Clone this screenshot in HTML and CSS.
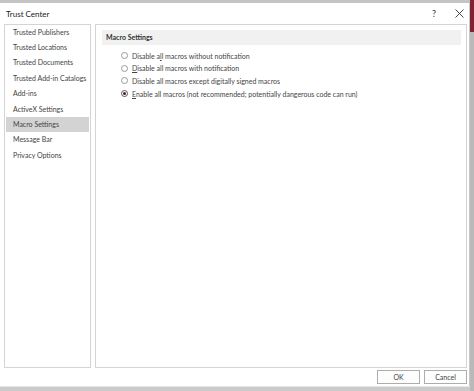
FILE: index.html
```html
<!DOCTYPE html>
<html>
<head>
<meta charset="utf-8">
<link rel="stylesheet" href="styles.css">
</head>
<body>
<div class="screen">
  <div class="main">
    <div class="topstrip"></div>
    <div class="dialog">
      <div class="titlebar">
        <span class="title">Trust Center</span>
        <span class="help">?</span>
        <span class="close">
          <svg width="9" height="9" viewBox="0 0 9 9"><path d="M0.5 0.5L8.5 8.5M8.5 0.5L0.5 8.5" stroke="#333" stroke-width="0.9" fill="none"/></svg>
        </span>
      </div>
      <div class="content">
        <ul class="nav">
          <li>Trusted Publishers</li>
          <li>Trusted Locations</li>
          <li>Trusted Documents</li>
          <li>Trusted Add-in Catalogs</li>
          <li>Add-ins</li>
          <li>ActiveX Settings</li>
          <li class="selected">Macro Settings</li>
          <li>Message Bar</li>
          <li>Privacy Options</li>
        </ul>
        <div class="panel">
          <div class="header">Macro Settings</div>
          <div class="options">
            <label class="opt"><span class="radio"></span><span>Disable a<u>l</u>l macros without notification</span></label>
            <label class="opt"><span class="radio"></span><span><u>D</u>isable all macros with notification</span></label>
            <label class="opt"><span class="radio"></span><span>Disable all macros except digitally signed macros</span></label>
            <label class="opt"><span class="radio checked"></span><span><u>E</u>nable all macros (not recommended; potentially dangerous code can run)</span></label>
          </div>
        </div>
      </div>
      <div class="footer">
        <button class="btn">OK</button>
        <button class="btn">Cancel</button>
      </div>
    </div>
    <div class="bottomstrip"></div>
  </div>
  <div class="edge">
    <div class="edge-red"></div>
    <div class="edge-gray"></div>
  </div>
</div>
</body>
</html>
```

FILE: styles.css
```css
* { box-sizing: border-box; }
html, body { margin: 0; padding: 0; }
body {
  width: 474px;
  height: 391px;
  overflow: hidden;
  background: #fff;
  font-family: "Lato", "Noto Sans", sans-serif;
  color: #3a3a3a;
}
.screen {
  display: flex;
  width: 474px;
  height: 391px;
}
.main {
  width: 470px;
  display: flex;
  flex-direction: column;
}
.topstrip {
  height: 3px;
  background: #c4c4c4;
}
.dialog {
  height: 383px;
  display: flex;
  flex-direction: column;
  background: #fff;
  border-right: 1px solid #c8c8c8;
}
.titlebar {
  height: 21px;
  display: flex;
  align-items: center;
  padding: 0 0 0 6px;
  font-size: 8px;
  color: #222;
}
.title { flex: 1; }
.help {
  width: 10px;
  font-size: 9px;
  margin-right: 13px;
  color: #333;
}
.close {
  width: 14px;
  display: flex;
  align-items: center;
}
.content {
  height: 344px;
  display: flex;
  gap: 4px;
  padding: 0 2px 0 4px;
}
.nav {
  list-style: none;
  margin: 0;
  padding: 0 1px;
  width: 87px;
  border: 1px solid #d4d4d4;
  font-size: 7px;
}
.nav li {
  height: 15.4px;
  line-height: 15.4px;
  padding-left: 7px;
  white-space: nowrap;
  color: #444;
}
.nav li:first-child { margin-top: -0.3px; }
.nav li.selected {
  background: #d3d3d3;
}
.panel {
  flex: 1;
  border: 1px solid #d4d4d4;
  padding: 5px 5px 0 6px;
}
.header {
  height: 15px;
  line-height: 15px;
  background: #f1f1f1;
  padding-left: 4px;
  font-size: 7px;
  font-weight: 700;
  color: #333;
}
.options {
  display: flex;
  flex-direction: column;
  padding: 4.5px 0 0 19px;
}
.opt {
  height: 12.6px;
  display: flex;
  align-items: center;
  gap: 4px;
  font-size: 7px;
  color: #444;
  white-space: nowrap;
}
.opt u { text-decoration-thickness: 0.6px; text-underline-offset: 1px; }
.radio {
  width: 7px;
  height: 7px;
  border: 0.8px solid #9a9a9a;
  border-radius: 50%;
  background: #fff;
  display: flex;
  align-items: center;
  justify-content: center;
}
.radio.checked {
  border-color: #555;
}
.radio.checked::after {
  content: "";
  width: 3.4px;
  height: 3.4px;
  border-radius: 50%;
  background: #4a1e24;
}
.footer {
  flex: 1;
  display: flex;
  justify-content: flex-end;
  align-items: flex-start;
  gap: 4px;
  padding: 2px 2px 0 0;
}
.btn {
  height: 14px;
  width: 43px;
  border: 1px solid #adadad;
  background: #fdfdfd;
  font-family: inherit;
  font-size: 7px;
  color: #444;
  padding: 0;
  line-height: 12px;
}
.bottomstrip {
  flex: 1;
  background: #cbcbcb;
  border-top: 1px solid #e6e6e6;
}
.edge {
  width: 4px;
  display: flex;
  flex-direction: column;
}
.edge-red {
  height: 32px;
  background: #7d2430;
}
.edge-gray {
  flex: 1;
  background: #b9b9b9;
}
```
